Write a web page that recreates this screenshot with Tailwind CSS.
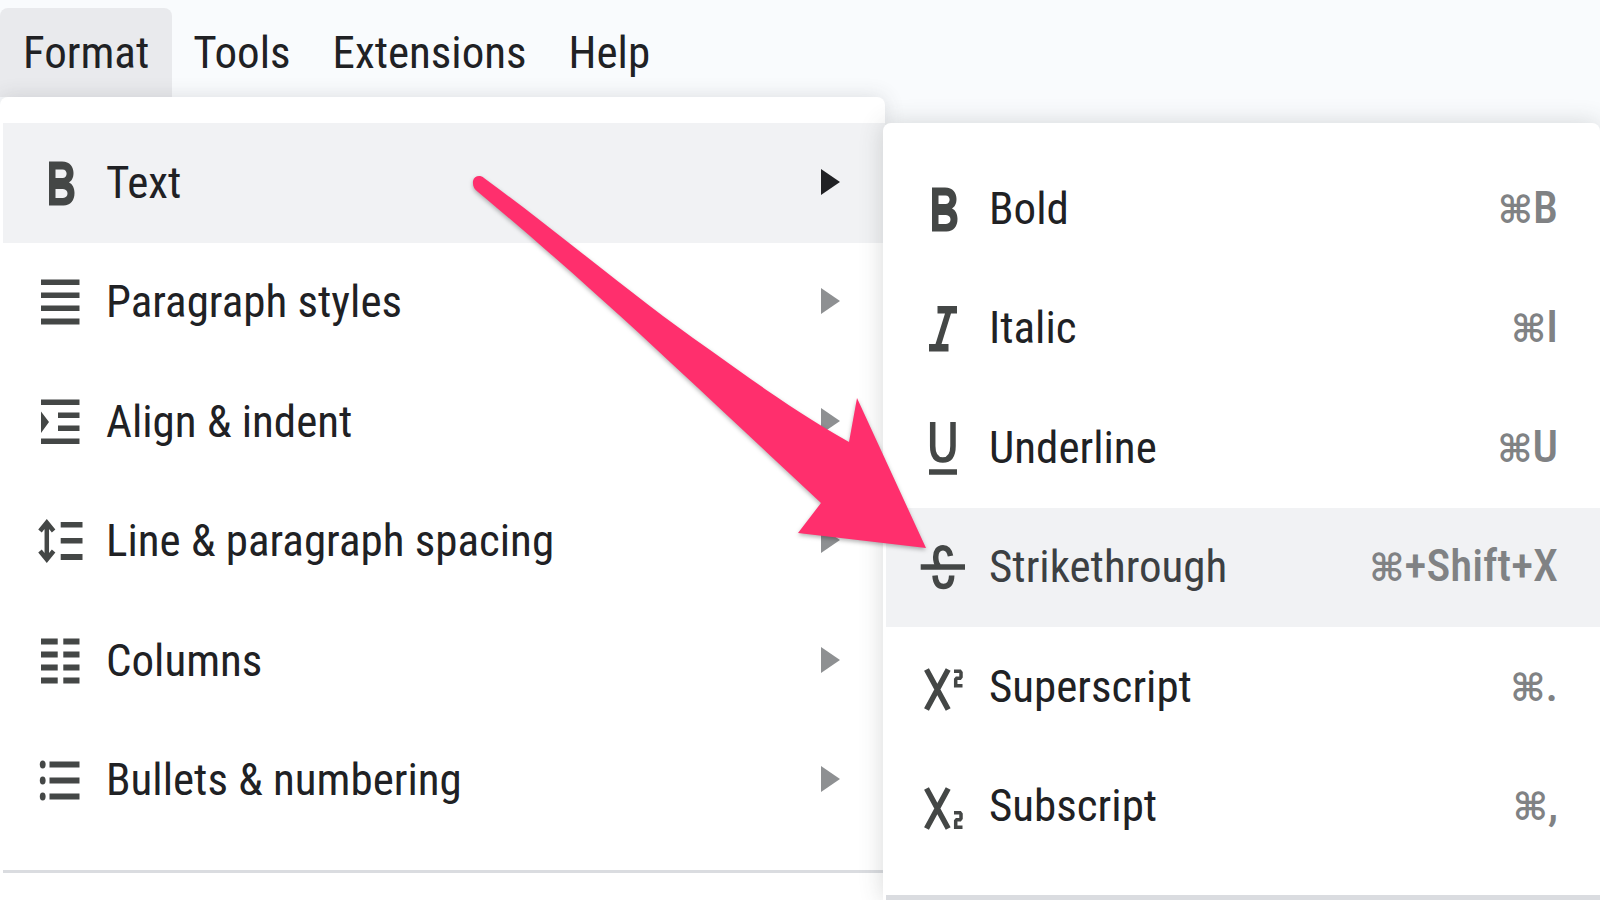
<!DOCTYPE html>
<html lang="en">
<head>
<meta charset="utf-8">
<meta name="viewport" content="width=device-width, initial-scale=1">
<title>Format menu</title>
<script src="https://cdn.jsdelivr.net/npm/@tailwindcss/browser@4"></script>
</head>
<body class="relative flex h-screen flex-col overflow-hidden bg-[#f9fbfd] font-['Roboto_Condensed',Roboto,'DejaVu_Sans',sans-serif] text-[45px] leading-[60px] text-[#202124]">

<nav class="flex h-[97px] shrink-0 items-end" aria-label="Menu bar">
  <button type="button" class="h-[89px] rounded-t-lg bg-[#e9eaed] px-[23px]">Format</button>
  <button type="button" class="h-[89px] px-[21px]">Tools</button>
  <button type="button" class="h-[89px] px-[21px]">Extensions</button>
  <button type="button" class="h-[89px] px-[21px]">Help</button>
</nav>

<main class="flex flex-1 items-stretch">
  <section class="w-[885px] shrink-0 rounded-t-lg bg-white pt-[26px] pl-[3px] shadow-[0_0_20px_rgba(60,64,67,0.16)]" aria-label="Format">
    <div class="grid h-[717px] grid-rows-6">
      <button type="button" class="flex items-center gap-5 bg-[#f1f2f4] pr-[45px] pl-[31px] text-left">
        <svg class="h-[60px] w-[52px]" viewBox="0 0 52 60" fill="#444746"><path fill-rule="evenodd" d="M15 8.500H28C36 8.500 39.500 14 39.500 20C39.500 25 37.500 28 35 29.500C38.500 31 40.500 35 40.500 40C40.500 47.500 36.500 52.500 29.500 52.500H15ZM21.500 16.500V25H28.500C34 25 34 16.500 28.500 16.500ZM21.500 36V45H29C35 45 35 36 29 36Z"/></svg>
        <span class="flex-1">Text</span>
        <svg class="h-7 w-5" viewBox="0 0 20 28" fill="#202124"><path d="M1 0L20 13L1 26Z"/></svg>
      </button>
      <button type="button" class="flex items-center gap-5 pr-[45px] pl-[31px] text-left">
        <svg class="h-[60px] w-[52px]" viewBox="0 0 52 60" fill="#444746"><path d="M7 7.500H45.500V13H7ZM7 20.500H45.500V26H7ZM7 33.500H45.500V39H7ZM7 46.500H45.500V52.500H7Z"/></svg>
        <span class="flex-1">Paragraph styles</span>
        <svg class="h-7 w-5" viewBox="0 0 20 28" fill="#8e9092"><path d="M1 0L20 13L1 26Z"/></svg>
      </button>
      <button type="button" class="flex items-center gap-5 pr-[45px] pl-[31px] text-left">
        <svg class="h-[60px] w-[52px]" viewBox="0 0 52 60" fill="#444746"><path d="M7 7.500H45.500V13H7ZM24 20.500H45.500V26H24ZM24 33.500H45.500V39H24ZM7 46.500H45.500V52H7ZM7 19.500L15 30L7 41Z"/></svg>
        <span class="flex-1">Align &amp; indent</span>
        <svg class="h-7 w-5" viewBox="0 0 20 28" fill="#8e9092"><path d="M1 0L20 13L1 26Z"/></svg>
      </button>
      <button type="button" class="flex items-center gap-5 pr-[45px] pl-[31px] text-left">
        <svg class="h-[60px] w-[52px]" viewBox="0 0 52 60" fill="#444746"><path d="M26.700 11H48.500V16.500H26.700ZM26.700 27H48.500V32.500H26.700ZM26.700 43H48.500V49H26.700Z"/><path fill="none" stroke="#444746" stroke-width="4.500" d="M12.800 12V48M6 20L12.800 11.500L19.600 20M6 40L12.800 48.500L19.600 40"/></svg>
        <span class="flex-1">Line &amp; paragraph spacing</span>
        <svg class="h-7 w-5" viewBox="0 0 20 28" fill="#8e9092"><path d="M1 0L20 13L1 26Z"/></svg>
      </button>
      <button type="button" class="flex items-center gap-5 pr-[45px] pl-[31px] text-left">
        <svg class="h-[60px] w-[52px]" viewBox="0 0 52 60" fill="#444746"><path d="M7 7.500H23.700V13.500H7ZM7 20.500H23.700V26.500H7ZM7 33.500H23.700V39.500H7ZM7 46.500H23.700V52.500H7ZM29.300 7.500H45.500V13.500H29.300ZM29.300 20.500H45.500V26.500H29.300ZM29.300 33.500H45.500V39.500H29.300ZM29.300 46.500H45.500V52.500H29.300Z"/></svg>
        <span class="flex-1">Columns</span>
        <svg class="h-7 w-5" viewBox="0 0 20 28" fill="#8e9092"><path d="M1 0L20 13L1 26Z"/></svg>
      </button>
      <button type="button" class="flex items-center gap-5 pr-[45px] pl-[31px] text-left">
        <svg class="h-[60px] w-[52px]" viewBox="0 0 52 60" fill="#444746"><path d="M15.500 11.500H45.500V17.500H15.500ZM15.500 27.500H45.500V33.500H15.500ZM15.500 43.500H45.500V49.500H15.500Z"/><ellipse cx="8.700" cy="14.500" rx="2.900" ry="4"/><ellipse cx="8.700" cy="30.500" rx="2.900" ry="4"/><ellipse cx="8.700" cy="46.500" rx="2.900" ry="4"/></svg>
        <span class="flex-1">Bullets &amp; numbering</span>
        <svg class="h-7 w-5" viewBox="0 0 20 28" fill="#8e9092"><path d="M1 0L20 13L1 26Z"/></svg>
      </button>
    </div>
    <hr class="mt-[30px] border-t-[3px] border-[#dadce0]">
  </section>

  <section class="-ml-[2px] mt-[26px] flex-1 rounded-t-lg bg-white pt-[26px] pl-[3px] shadow-[0_0_24px_rgba(60,64,67,0.2)]" aria-label="Text">
    <div class="grid h-[717px] grid-rows-6">
      <button type="button" class="flex items-center gap-5 pr-[42px] pl-[31px] text-left">
        <svg class="h-[60px] w-[52px]" viewBox="0 0 52 60" fill="#444746"><path fill-rule="evenodd" d="M15 8.500H28C36 8.500 39.500 14 39.500 20C39.500 25 37.500 28 35 29.500C38.500 31 40.500 35 40.500 40C40.500 47.500 36.500 52.500 29.500 52.500H15ZM21.500 16.500V25H28.500C34 25 34 16.500 28.500 16.500ZM21.500 36V45H29C35 45 35 36 29 36Z"/></svg>
        <span class="flex-1">Bold</span>
        <span class="font-medium text-[#808284]"><span class="text-[38px] font-bold">⌘</span>B</span>
      </button>
      <button type="button" class="flex items-center gap-5 pr-[42px] pl-[31px] text-left">
        <svg class="h-[60px] w-[52px]" viewBox="0 0 52 60" fill="#444746"><path d="M20.500 8H40V15.500H34L24.500 46H31.500V53.500H12V46H18.500L28 15.500H20.500Z"/></svg>
        <span class="flex-1">Italic</span>
        <span class="font-medium text-[#808284]"><span class="text-[38px] font-bold">⌘</span>I</span>
      </button>
      <button type="button" class="flex items-center gap-5 pr-[42px] pl-[31px] text-left">
        <svg class="h-[60px] w-[52px]" viewBox="0 0 52 60" fill="none" stroke="#444746" stroke-width="5.500"><path d="M15.700 4V28C15.700 37 19 42 25.800 42C32.600 42 36 37 36 28V4M12 54H40"/></svg>
        <span class="flex-1">Underline</span>
        <span class="font-medium text-[#808284]"><span class="text-[38px] font-bold">⌘</span>U</span>
      </button>
      <button type="button" class="flex items-center gap-5 bg-[#f1f2f4] pr-[42px] pl-[31px] text-left">
        <svg class="h-[60px] w-[52px]" viewBox="0 0 52 60" fill="none" stroke="#444746" stroke-width="5.500"><path d="M3.700 30H48M33.500 19C32.500 13.500 30 10.700 26 10.700C21.500 10.700 18.700 14.500 18.700 20C18.700 24 19.500 27 21.500 29M18 38.500C18.500 45.500 21 49.500 26.500 49.500C32 49.500 34.500 45.500 34.700 38.500"/></svg>
        <span class="flex-1 text-[#3c4043]">Strikethrough</span>
        <span class="font-medium text-[#808284]"><span class="text-[38px] font-bold">⌘</span>+Shift+X</span>
      </button>
      <button type="button" class="flex items-center gap-5 pr-[42px] pl-[31px] text-left">
        <svg class="h-[60px] w-[52px]" viewBox="0 0 52 60" fill="none" stroke="#444746"><path stroke-width="5.500" d="M9.500 12.500L31.200 52.500M31.200 12.500L9.500 52.500"/><path stroke-width="3.500" d="M37 14.200H43L44 15.500V20L43 21.300H39.700L38.700 22.500V28.700H45.500"/></svg>
        <span class="flex-1">Superscript</span>
        <span class="font-medium text-[#808284]"><span class="text-[38px] font-bold">⌘</span>.</span>
      </button>
      <button type="button" class="flex items-center gap-5 pr-[42px] pl-[31px] text-left">
        <svg class="h-[60px] w-[52px]" viewBox="0 0 52 60" fill="none" stroke="#444746"><path stroke-width="5.500" d="M9.500 12.500L31.200 52.500M31.200 12.500L9.500 52.500"/><path stroke-width="3.500" d="M37 36.700H43L44 38V42.500L43 43.800H39.700L38.700 45V51.200H45.500"/></svg>
        <span class="flex-1">Subscript</span>
        <span class="font-medium text-[#808284]"><span class="text-[38px] font-bold">⌘</span>,</span>
      </button>
    </div>
    <hr class="mt-[29px] border-t-[5px] border-[#dadce0]">
  </section>
</main>

<!-- Pointer arrow laid over both menus -->
<svg class="pointer-events-none absolute top-[160px] left-[460px] h-[410px] w-[500px] drop-shadow-[0_2px_2px_rgba(0,0,0,0.3)]" viewBox="0 0 500 410" fill="#ff2f6d" aria-hidden="true">
  <path d="M24 18C20 14.500 14 16 13 21C12.500 26 14 29 18 32C78 82 146 142 211 203C265 253 315 300 361 343L338 373L466 388L397 238L389 282C330 249 280 211 233 178C165 129 95 70 24 18Z"/>
</svg>
</body>
</html>
